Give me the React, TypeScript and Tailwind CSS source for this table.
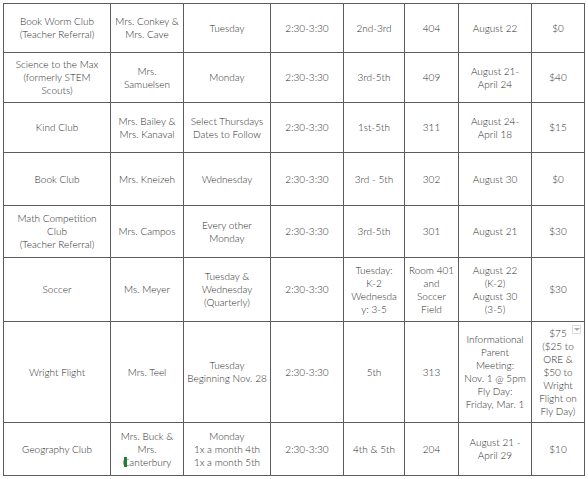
import React from "react";

type Row = { h: number; cells: string[][] };

const widths = [107, 73, 87, 73, 61, 54, 73, 53];

const rows: Row[] = [
  {
    h: 49,
    cells: [
      ["Book Worm Club", "(Teacher Referral)"],
      ["Mrs. Conkey &", "Mrs. Cave"],
      ["Tuesday"],
      ["2:30-3:30"],
      ["2nd-3rd"],
      ["404"],
      ["August 22"],
      ["$0"],
    ],
  },
  {
    h: 50,
    cells: [
      ["Science to the Max", "(formerly STEM", "Scouts)"],
      ["Mrs.", "Samuelsen"],
      ["Monday"],
      ["2:30-3:30"],
      ["3rd-5th"],
      ["409"],
      ["August 21-", "April 24"],
      ["$40"],
    ],
  },
  {
    h: 50,
    cells: [
      ["Kind Club"],
      ["Mrs. Bailey &", "Mrs. Kanaval"],
      ["Select Thursdays", "Dates to Follow"],
      ["2:30-3:30"],
      ["1st-5th"],
      ["311"],
      ["August 24-", "April 18"],
      ["$15"],
    ],
  },
  {
    h: 53,
    cells: [
      ["Book Club"],
      ["Mrs. Kneizeh"],
      ["Wednesday"],
      ["2:30-3:30"],
      ["3rd - 5th"],
      ["302"],
      ["August 30"],
      ["$0"],
    ],
  },
  {
    h: 52,
    cells: [
      ["Math Competition", "Club", "(Teacher Referral)"],
      ["Mrs. Campos"],
      ["Every other", "Monday"],
      ["2:30-3:30"],
      ["3rd-5th"],
      ["301"],
      ["August 21"],
      ["$30"],
    ],
  },
  {
    h: 64,
    cells: [
      ["Soccer"],
      ["Ms. Meyer"],
      ["Tuesday &", "Wednesday", "(Quarterly)"],
      ["2:30-3:30"],
      ["Tuesday:", "K-2", "Wednesda", "y: 3-5"],
      ["Room 401", "and", "Soccer", "Field"],
      ["August 22", "(K-2)", "August 30", "(3-5)"],
      ["$30"],
    ],
  },
  {
    h: 101,
    cells: [
      ["Wright Flight"],
      ["Mrs. Teel"],
      ["Tuesday", "Beginning Nov. 28"],
      ["2:30-3:30"],
      ["5th"],
      ["313"],
      [
        "Informational",
        "Parent",
        "Meeting:",
        "Nov. 1 @ 5pm",
        "Fly Day:",
        "Friday, Mar. 1",
      ],
      ["$75", "($25 to", "ORE &", "$50 to", "Wright", "Flight on", "Fly Day)"],
    ],
  },
  {
    h: 53,
    cells: [
      ["Geography Club"],
      ["Mrs. Buck &", "Mrs.", "Canterbury"],
      ["Monday", "1x a month 4th", "1x a month 5th"],
      ["2:30-3:30"],
      ["4th & 5th"],
      ["204"],
      ["August 21 -", "April 29"],
      ["$10"],
    ],
  },
];

export default function App() {
  return (
    <div
      className="w-[588px] h-[479px] bg-white pl-[3px] pt-[3px] overflow-hidden text-[#2e2e2e] text-[10px] leading-[13px] font-light"
      style={{ fontFamily: "Lato, 'Noto Sans', sans-serif" }}
    >
      <table className="border-collapse table-fixed">
        <colgroup>
          {widths.map((w, i) => (
            <col key={i} style={{ width: w }} />
          ))}
        </colgroup>
        <tbody>
          {rows.map((r, ri) => (
            <tr key={ri} style={{ height: r.h }}>
              {r.cells.map((c, ci) => (
                <td
                  key={ci}
                  className="relative border border-[#5c5c5c] text-center align-middle p-0 whitespace-nowrap"
                >
                  {c.map((line, li) => (
                    <div key={li} className="relative">
                      {ri === 7 && ci === 1 && li === 2 && (
                        <span className="absolute left-[13px] top-[1px] w-[3px] h-[10px] bg-[#1e7e34]" />
                      )}
                      {line}
                    </div>
                  ))}
                  {ri === 6 && ci === 7 && (
                    <span className="absolute right-[3px] top-[3px] w-[9px] h-[9px] border border-[#ddd] bg-white flex items-center justify-center">
                      <span className="w-0 h-0 border-l-[3px] border-r-[3px] border-t-[3px] border-l-transparent border-r-transparent border-t-[#aaa]" />
                    </span>
                  )}
                </td>
              ))}
            </tr>
          ))}
        </tbody>
      </table>
    </div>
  );
}
